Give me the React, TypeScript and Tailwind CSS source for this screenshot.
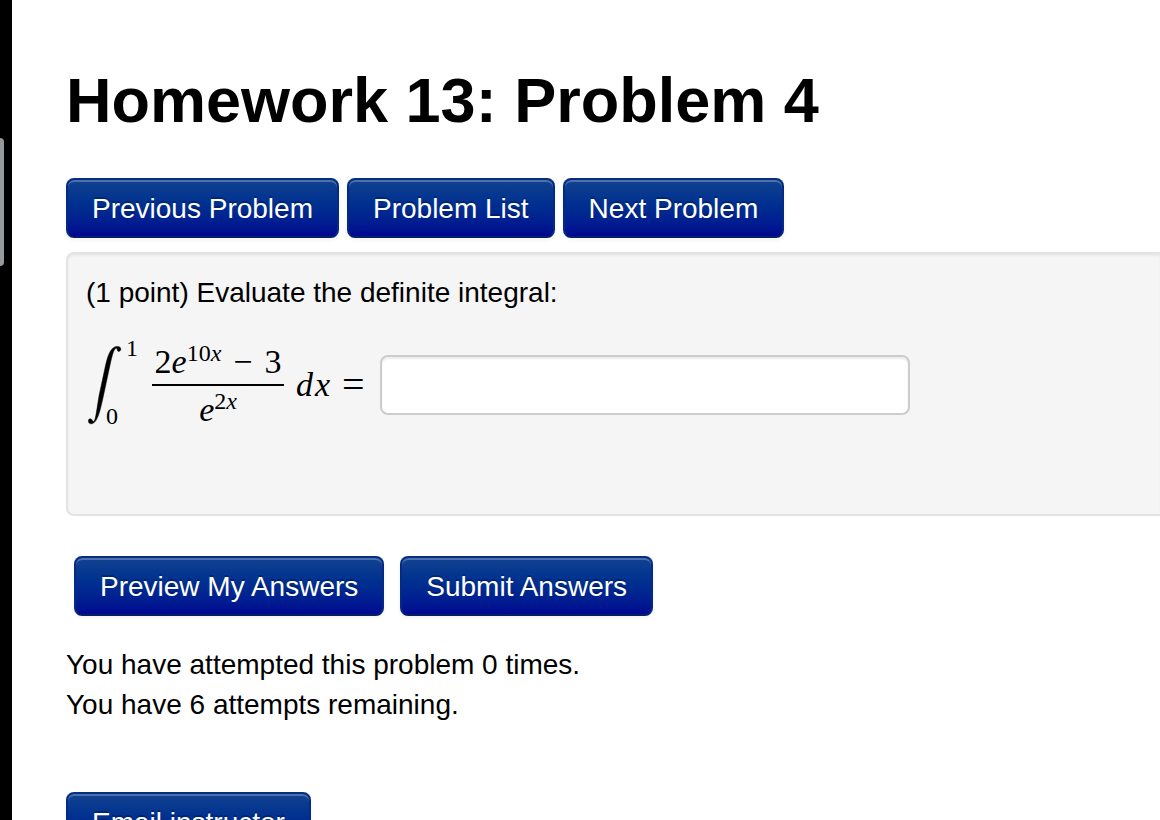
import type { ButtonHTMLAttributes, ReactNode } from "react";

function PrimaryButton(props: ButtonHTMLAttributes<HTMLButtonElement>) {
  return (
    <button
      type="button"
      {...props}
      className="h-[60px] cursor-pointer rounded-lg border-2 border-x-[#052a86] border-t-[#062e80] border-b-[#00206c] bg-linear-to-b from-[#14438f] to-[#000090] bg-origin-border px-6 pt-0.5 text-[28px] leading-10 whitespace-nowrap text-white shadow-[inset_0_2px_0_rgba(255,255,255,0.25),0_2px_4px_rgba(0,0,0,0.05)] text-shadow-[0_-2px_0_rgba(0,0,0,0.25)]"
    />
  );
}

function Exponent({ children }: { children: ReactNode }) {
  return <sup className="static align-[12px] text-2xl leading-[0]">{children}</sup>;
}

function Integral() {
  return (
    <div className="flex h-[92px] self-start">
      <svg viewBox="0 0 34 92" className="h-[92px] w-[34px]" aria-hidden="true">
        <path
          d="M28.6 12.2C25.8 12.4 24.2 19 21.8 30L15.8 58C12.8 72 9.8 87.8 3.2 87.8C1.4 87.8 0.4 86.6 0.4 85C0.4 83.6 1.2 82.7 2.4 82.7C4 82.7 4.2 85.4 5.6 85.4C7.8 85.4 9.2 69 11.4 58L17.4 30C20 18 23.2 10.4 29.4 10.4C31.6 10.4 32.8 11.6 32.8 13C32.8 14.4 31.9 15.4 30.6 15.4C29 15.4 29.4 12.4 28.6 12.2Z"
          fill="black"
          stroke="black"
          strokeWidth="0.5"
        />
      </svg>
      <div className="-ml-4 flex flex-col justify-between text-2xl leading-none">
        <span className="pl-5">1</span>
        <span>0</span>
      </div>
    </div>
  );
}

function Fraction() {
  return (
    <div className="flex w-[132px] flex-col items-center gap-1.5 pt-1 leading-8">
      <div className="whitespace-nowrap">
        2<i>e</i>
        <Exponent>
          10<i>x</i>
        </Exponent>
        <span className="mx-3">−</span>3
      </div>
      <div className="h-0.5 w-full bg-black" />
      <div className="leading-9">
        <i>e</i>
        <Exponent>
          2<i>x</i>
        </Exponent>
      </div>
    </div>
  );
}

export default function App() {
  return (
    <div className="flex h-screen overflow-hidden bg-white font-['Liberation_Sans',Arial,sans-serif] text-[28px] leading-10 text-black">
      <div className="w-3 shrink-0 bg-black pt-[138px]">
        <div className="h-32 w-1 rounded-r bg-[#96999c]" />
      </div>
      <main className="min-w-0 grow pt-[60px] pl-[54px]">
        <h1 className="text-[63px] leading-[80px] font-bold">Homework 13: Problem 4</h1>

        <nav className="mt-[38px] flex gap-2">
          <PrimaryButton>Previous Problem</PrimaryButton>
          <PrimaryButton>Problem List</PrimaryButton>
          <PrimaryButton>Next Problem</PrimaryButton>
        </nav>

        <form>
          <section className="mt-3.5 rounded-l-lg border-2 border-r-0 border-[#e3e3e3] bg-[#f5f5f5] px-[18px] pt-[19px] pb-20 shadow-[inset_0_2px_2px_rgba(0,0,0,0.05)]">
            <p>(1 point) Evaluate the definite integral:</p>
            <div className="mt-[23px] flex items-center">
              <label
                htmlFor="answer"
                className="flex h-[98px] items-center pl-0.5 font-['Liberation_Serif','Times_New_Roman',serif] text-[34px]"
              >
                <Integral />
                <span className="ml-3.5">
                  <Fraction />
                </span>
                <span className="ml-3 flex items-center gap-3 whitespace-nowrap">
                  <i className="flex gap-0.5">
                    <span>d</span>
                    <span>x</span>
                  </i>
                  <span className="text-[40px]">=</span>
                </span>
              </label>
              <input
                id="answer"
                type="text"
                className="ml-[15px] h-[60px] w-[530px] rounded-lg border-2 border-[#cccccc] bg-white px-3 shadow-[inset_0_2px_2px_rgba(0,0,0,0.075)]"
              />
            </div>
          </section>

          <div className="mt-10 flex gap-4 pl-2">
            <PrimaryButton>Preview My Answers</PrimaryButton>
            <PrimaryButton type="submit">Submit Answers</PrimaryButton>
          </div>
        </form>

        <p className="mt-[29px]">
          You have attempted this problem 0 times.
          <br />
          You have 6 attempts remaining.
        </p>

        <div className="mt-[67px]">
          <PrimaryButton>Email instructor</PrimaryButton>
        </div>
      </main>
    </div>
  );
}
